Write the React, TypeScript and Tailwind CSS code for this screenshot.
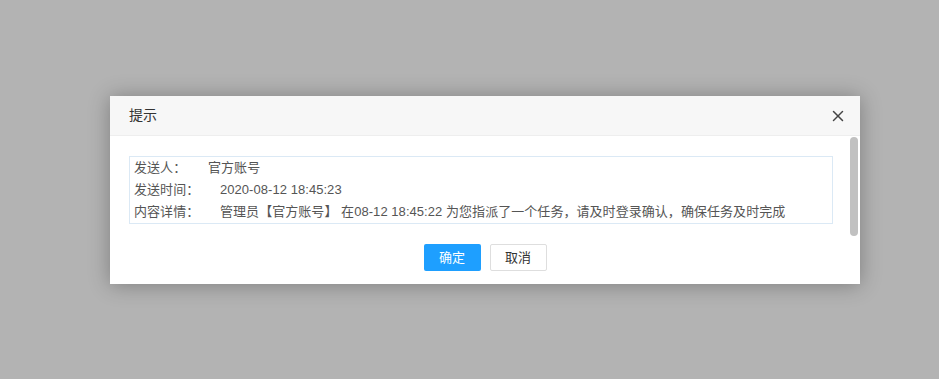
import { X } from "lucide-react";

const rows = [
  { label: "发送人：", value: "官方账号", indent: "pl-[4px]" },
  { label: "发送时间：", value: "2020-08-12 18:45:23", indent: "pl-[16px]" },
  {
    label: "内容详情：",
    value: "管理员【官方账号】 在08-12 18:45:22 为您指派了一个任务，请及时登录确认，确保任务及时完成",
    indent: "pl-[16px]",
  },
];

export default function App() {
  return (
    <div
      className="w-[939px] h-[379px] bg-[#b3b3b3] pt-[96px] pl-[110px]"
      style={{ fontFamily: '"Liberation Sans", "Noto Sans CJK SC", sans-serif' }}
    >
      <div className="relative w-[750px] h-[188px] bg-white shadow-[0_1px_20px_rgba(0,0,0,0.3)]">
        {/* Header */}
        <div className="h-[40px] flex items-center justify-between bg-[#f7f7f7] border-b border-[#eeeeee] pl-[19px] pr-[13px]">
          <span className="text-[14px] text-[#333]">提示</span>
          <X className="w-[18px] h-[18px] text-[#444]" strokeWidth={2} />
        </div>

        {/* Body */}
        <div className="pt-[20px] pl-[19px] pr-[27px]">
          <div className="border border-[#dbe9f5] pl-[4px]">
            {rows.map((r) => (
              <div key={r.label} className="flex h-[22px] items-center text-[13px] text-[#555] whitespace-nowrap tracking-[0.05px]">
                <span className="w-[70px]">{r.label}</span>
                <span className={r.indent}>{r.value}</span>
              </div>
            ))}
          </div>
        </div>

        {/* Buttons */}
        <div className="flex justify-center gap-[9px] pt-[20px]">
          <button className="w-[57px] h-[27px] bg-[#1e9fff] text-white text-[13px] rounded-[2px]">确定</button>
          <button className="w-[57px] h-[27px] bg-white border border-[#dedede] text-[#333] text-[13px] rounded-[2px]">取消</button>
        </div>

        {/* Scrollbar thumb */}
        <div className="absolute right-[2px] top-[41px] w-[8px] h-[99px] rounded-full bg-[#c1c1c1]" />
      </div>
    </div>
  );
}
